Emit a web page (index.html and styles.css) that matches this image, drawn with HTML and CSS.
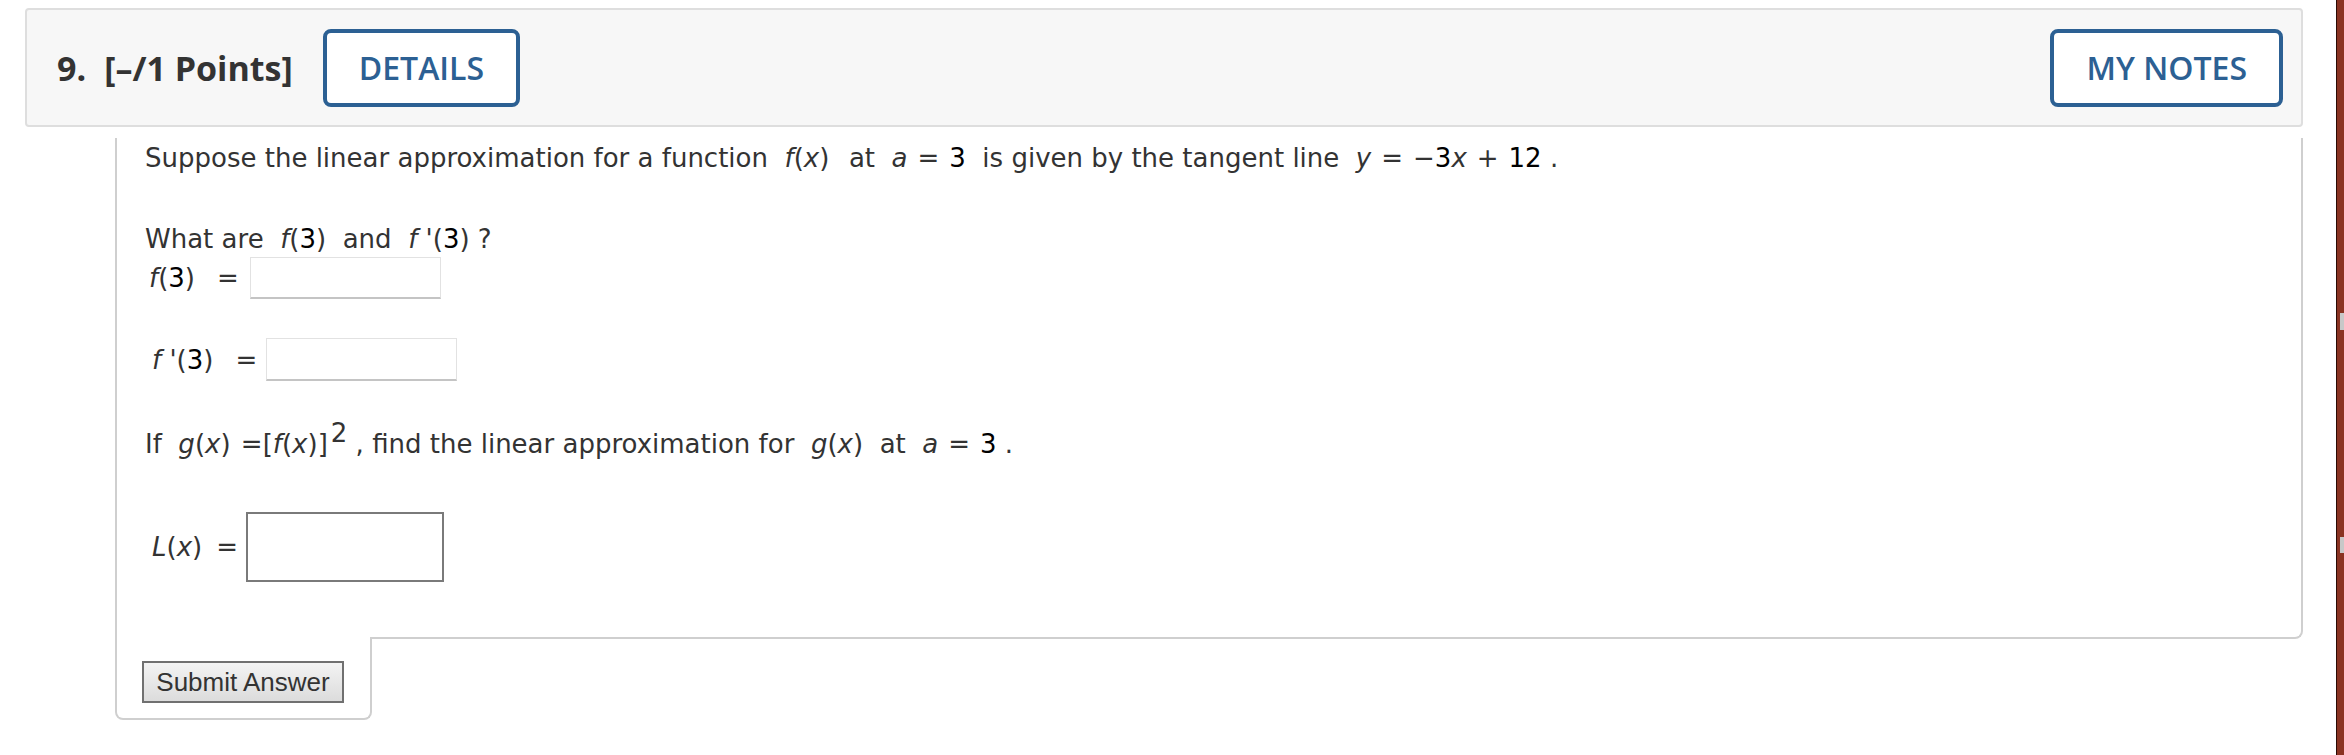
FILE: index.html
```html
<!DOCTYPE html>
<html>
<head>
<meta charset="utf-8">
<link rel="stylesheet" href="styles.css">
</head>
<body>
<div class="page">
  <div class="content">
    <div class="qhead">
      <div class="qtitle"><span class="qnum">9.</span><span>[–/1 Points]</span></div>
      <button class="hbtn details">DETAILS</button>
      <div class="spacer"></div>
      <button class="hbtn">MY NOTES</button>
    </div>
    <div class="qbody">
      <div class="main">
        <p class="row txt r1">Suppose the linear approximation for a function  <i>f</i>(<i>x</i>)<span class="mg"></span>  at  <i>a</i><span class="op">=</span><span class="n">3</span>  is given by the tangent line  <i>y</i><span class="ops">=</span><span class="neg">−</span><span class="n">3</span><i>x</i><span class="ops">+</span><span class="n">12</span> .</p>
        <p class="row txt r2">What are  <i>f</i>(<span class="n">3</span>)  and  <i>f</i> <i>'</i>(<span class="n">3</span>) ?</p>
        <div class="row r3"><span class="lbl l1"><i>f</i>(<span class="n">3</span>)</span><span class="eq e1">=</span><span class="box small b1"></span></div>
        <div class="row r4"><span class="lbl l2"><i>f</i> <i>'</i>(<span class="n">3</span>)</span><span class="eq e2">=</span><span class="box small b2"></span></div>
        <p class="row txt r5">If  <i>g</i>(<i>x</i>) <span class="op2">=</span>[<i>f</i>(<i>x</i>)]<sup>2</sup> , find the linear approximation for  <i>g</i>(<i>x</i>)  at  <i>a</i><span class="op">=</span><span class="n">3</span> .</p>
        <div class="row r6"><span class="lbl l3"><i>L</i>(<i>x</i>)</span><span class="eq e3">=</span><span class="box big"></span></div>
      </div>
      <div class="tab"><button class="submit">Submit Answer</button></div>
    </div>
  </div>
  <div class="rail"><span class="mark m1"></span><span class="mark m2"></span></div>
</div>
</body>
</html>
```

FILE: styles.css
```css
html, body {
  margin: 0;
  padding: 0;
  background: #fff;
}
.page {
  display: flex;
  width: 2344px;
  height: 755px;
  overflow: hidden;
}
.content {
  flex: 1;
  padding: 8px 33px 0 25px;
}
.qhead {
  box-sizing: border-box;
  height: 119px;
  display: flex;
  align-items: center;
  background: #f7f7f7;
  border: 2px solid #dedede;
  border-radius: 4px;
  padding: 0 18px 0 30px;
}
.qtitle {
  font-family: "Open Sans", "Liberation Sans", sans-serif;
  font-weight: 700;
  font-size: 34px;
  color: #333;
  white-space: pre;
}
.qnum {
  margin-right: 18px;
}
.hbtn {
  box-sizing: border-box;
  height: 78px;
  padding: 0 32px;
  border: 4px solid #2c6093;
  border-radius: 8px;
  background: #fff;
  color: #2c6093;
  font-family: "Open Sans", "Liberation Sans", sans-serif;
  font-weight: 600;
  font-size: 32px;
  line-height: 1;
}
.details {
  margin-left: 30px;
}
.spacer {
  flex: 1;
}
.qbody {
  margin-left: 90px;
}
.main {
  border: 2px solid #cfcfcf;
  border-top: none;
  border-radius: 0 0 8px 0;
  padding: 0 0 55px 28px;
  font-family: "DejaVu Sans", Verdana, sans-serif;
  font-size: 26px;
  color: #333;
}
.row {
  margin: 0;
  white-space: pre;
  display: flex;
  align-items: center;
}
.row.txt {
  display: block;
}
.row i {
  font-style: italic;
}
.n {
  color: #000;
}
.op {
  margin: 0 10px;
}
.ops {
  margin: 0 10px;
}
.neg {
  margin-left: 0;
}
.op2 {
  margin-left: 2px;
}
.mg {
  display: inline-block;
  width: 3px;
}
.r1 { height: 40px; line-height: 40px; margin-top: 11px; }
.r2 { height: 34px; line-height: 34px; margin-top: 44px; }
.r3 { height: 42px; margin-top: 1px; }
.r4 { height: 43px; margin-top: 39px; }
.r5 { height: 40px; line-height: 40px; margin-top: 43px; }
.r6 { height: 70px; margin-top: 48px; }
.row sup {
  font-size: 26px;
  line-height: 1;
  position: relative;
  top: -11px;
  margin-left: 3px;
  vertical-align: baseline;
}
.lbl { display: inline-block; }
.l1 { margin-left: 4px; }
.l2 { margin-left: 7px; }
.l3 { margin-left: 7px; }
.e1 { margin-left: 22px; margin-right: 11px; }
.e2 { margin-left: 22px; margin-right: 9px; }
.e3 { margin-left: 14px; margin-right: 8px; }
.box {
  display: inline-block;
  box-sizing: border-box;
  background: #fff;
}
.small {
  height: 42px;
  border: 1px solid #e2e2e2;
  border-bottom: 2px solid #c4c4c4;
}
.b1 { width: 191px; }
.b2 { width: 191px; height: 43px; }
.big {
  width: 198px;
  height: 70px;
  border: 2px solid #7a7a7a;
}
.tab {
  position: relative;
  box-sizing: border-box;
  width: 257px;
  margin-top: -2px;
  background: #fff;
  border: 2px solid #cfcfcf;
  border-top: none;
  border-radius: 0 0 8px 8px;
  padding: 24px 0 15px 25px;
}
.submit {
  display: block;
  box-sizing: border-box;
  width: 202px;
  height: 42px;
  padding: 0;
  border: 2px solid #707070;
  border-radius: 0;
  background: linear-gradient(#f3f3f3, #dcdcdc);
  color: #333;
  font-family: "Liberation Sans", Arial, sans-serif;
  font-size: 26px;
  line-height: 1;
}
.rail {
  width: 8px;
  flex: none;
  box-sizing: border-box;
  background: #8a3322;
  border-left: 1px solid #2a0a05;
  display: flex;
  flex-direction: column;
  align-items: flex-end;
}
.mark {
  display: block;
  width: 4px;
  background: #c8c8c8;
}
.m1 { margin-top: 313px; height: 17px; }
.m2 { margin-top: 207px; height: 16px; }
```
